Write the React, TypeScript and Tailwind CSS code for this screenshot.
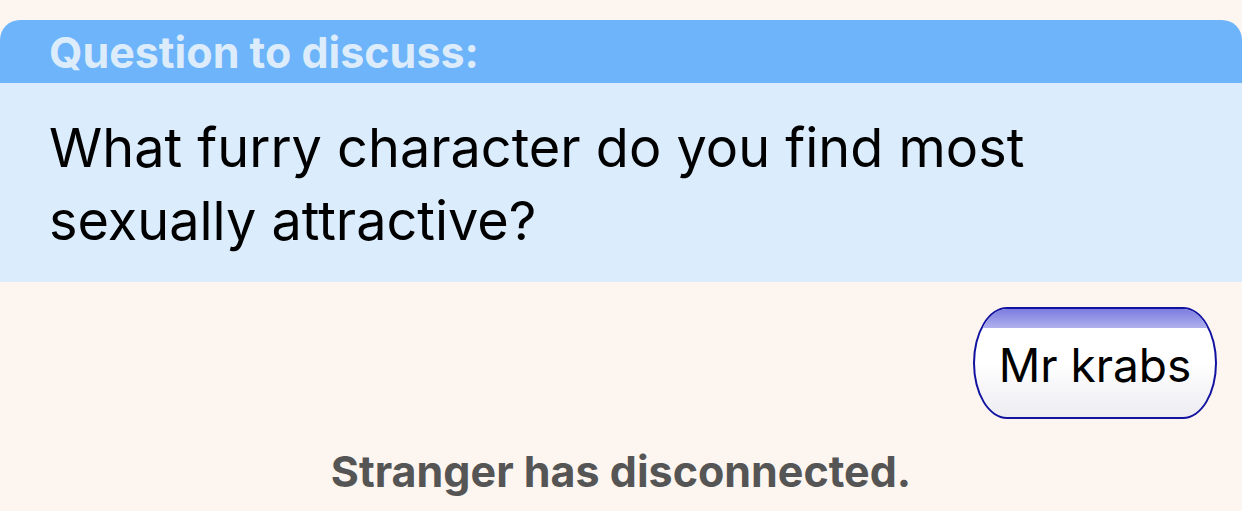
export default function App() {
  return (
    <div className="w-[1242px] h-[511px] bg-[#fdf5ef] pt-[20px] overflow-hidden" style={{ fontFamily: "Inter, 'Noto Sans', sans-serif" }}>
      <div className="rounded-t-[20px] overflow-hidden">
        <div className="bg-[#6db4fb] h-[63px] pl-[49px] pt-[11px]">
          <div className="text-[43px] font-bold text-[#dcecfb] leading-none">Question to discuss:</div>
        </div>
        <div className="bg-[#dbecfc] h-[199px] pl-[49px] pt-[28px]">
          <p className="text-[54px] leading-[73px] text-black">What furry character do you find most<br />sexually attractive?</p>
        </div>
      </div>
      <div className="flex justify-end pr-[25px] pt-[25px]">
        <div className="relative w-[244px] h-[112px] rounded-[34px/56px] border-2 border-[#1212a0] overflow-hidden bg-gradient-to-b from-white via-white to-[#ececf2] flex items-center justify-center">
          <div className="absolute top-0 left-0 right-0 h-[19px] bg-gradient-to-b from-[#7c7cde] to-[#b0b0ee]" />
          <span className="relative text-[46px] text-black mt-[4px]">Mr krabs</span>
        </div>
      </div>
      <div className="flex justify-center pt-[31px]">
        <span className="text-[43px] font-bold text-[#555555] leading-none">Stranger has disconnected.</span>
      </div>
    </div>
  );
}
